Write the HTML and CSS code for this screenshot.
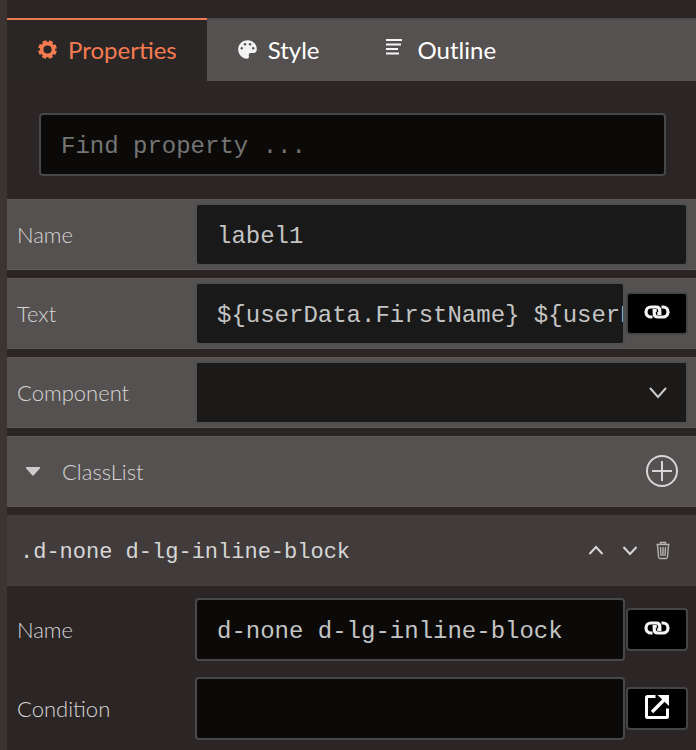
FILE: index.html
```html
<!DOCTYPE html>
<html lang="en">
<head>
<meta charset="utf-8">
<title>Properties</title>
<link rel="stylesheet" href="styles.css">
</head>
<body>
<svg class="sprite" aria-hidden="true">
  <symbol id="link" viewBox="0 0 26 14">
    <g fill="none" stroke="#f5f5f5" stroke-width="3.200">
      <path d="M8.500 12H7A5 5 0 0 1 7 2h5q3.800 0 3.800 3.800V8.500h-2.500"/>
      <path d="M17.500 2H19A5 5 0 0 1 19 12h-5q-3.800 0-3.800-3.800V5.500h2.500"/>
    </g>
  </symbol>
</svg>
<main class="panel">
  <nav class="tabs" role="tablist">
    <button class="tab tab-active" role="tab" aria-selected="true">
      <svg width="19" height="19" viewBox="0 0 19 19"><g fill="none" stroke="currentColor"><circle cx="9.500" cy="9.500" r="5.900" stroke-width="3.600"/><circle cx="9.500" cy="9.500" r="8.200" stroke-width="2.400" stroke-dasharray="4 2.440" stroke-dashoffset="-1.220"/></g></svg>
      <span>Properties</span>
    </button>
    <button class="tab" role="tab">
      <svg width="19" height="19" viewBox="0 0 19 19"><path fill="#f2f2f2" d="M9.500 .3C4.300.3.2 4.300.2 9.300c0 5.200 4 9.400 8.900 9.400 1.400 0 2-.9 1.800-2-.3-1.600-.2-3.300 1.700-3.600 2.200-.3 6.200 1 6.200-4C18.800 4.200 14.700.3 9.500.3z"/><g fill="#555150"><circle cx="3.800" cy="8.300" r="1.200"/><circle cx="7" cy="4.300" r="1.200"/><circle cx="12" cy="4.300" r="1.200"/><circle cx="15.200" cy="8.300" r="1.200"/></g></svg>
      <span>Style</span>
    </button>
    <button class="tab" role="tab">
      <svg width="26" height="24" viewBox="0 0 26 24"><path stroke="#f5f5f5" stroke-width="2" d="M5 2h16M5 6.500h15M5 11h12M5 15.500h13"/></svg>
      <span>Outline</span>
    </button>
  </nav>

  <div class="search">
    <input class="box" type="text" placeholder="Find property ..." aria-label="Find property">
  </div>

  <div class="rows">
    <div class="row row-light">
      <label for="name">Name</label>
      <input class="box" id="name" type="text" value="label1">
    </div>
    <div class="row row-light">
      <label for="text">Text</label>
      <input class="box" id="text" type="text" value="${userData.FirstName} ${userD">
      <button class="bind" aria-label="Bind text"><svg width="26" height="14"><use href="#link"/></svg></button>
    </div>
    <div class="row row-light">
      <label for="component">Component</label>
      <div class="select">
        <select class="box" id="component"><option></option></select>
        <svg class="arrow" width="20" height="14" viewBox="0 0 20 14"><path d="M2 2l8 9 8-9"/></svg>
      </div>
    </div>
    <div class="row row-light row-group">
      <button class="toggle" aria-expanded="true">
        <svg width="16" height="11" viewBox="0 0 16 11"><path fill="#ccc" d="M1.500 1h13q1 .3.500 1.300L9 9q-1 1.300-2 0L1 2.300Q.500 1.300 1.500 1z"/></svg>
        <span>ClassList</span>
      </button>
      <button class="plain" aria-label="Add class"><svg class="line" width="34" height="34" viewBox="0 0 34 34"><circle cx="17" cy="16" r="15"/><path d="M17 6v20M7 16h20"/></svg></button>
    </div>
    <div class="row row-item">
      <code>.d-none d-lg-inline-block</code>
      <div class="actions">
        <button class="plain" aria-label="Move up"><svg class="line" width="16" height="12" viewBox="0 0 16 12"><path d="M1.500 9L8 2l6.500 7"/></svg></button>
        <button class="plain" aria-label="Move down"><svg class="line" width="16" height="12" viewBox="0 0 16 12"><path d="M1.500 2L8 9l6.500-7"/></svg></button>
        <button class="plain" aria-label="Delete"><svg class="trash" width="14" height="20" viewBox="0 0 14 20"><path d="M.500 3.500h13M4.500 3V1.500h5V3M1.500 4l1 12q.200 1.500 1.500 1.500h6q1.300 0 1.500-1.500l1-12M4.500 6l.500 9M7 6v9M9.500 6L9 15"/></svg></button>
      </div>
    </div>
    <div class="row">
      <label for="class-name">Name</label>
      <input class="box" id="class-name" type="text" value="d-none d-lg-inline-block">
      <button class="bind" aria-label="Bind name"><svg width="26" height="14"><use href="#link"/></svg></button>
    </div>
    <div class="row">
      <label for="condition">Condition</label>
      <input class="box" id="condition" type="text">
      <button class="bind" aria-label="Open condition"><svg width="26" height="26" viewBox="0 0 26 26"><g fill="none" stroke="#fff"><path stroke-width="3" d="M11.500 2.500h-8q-1 0-1 1v19q0 1 1 1h19q1 0 1-1v-8"/><path stroke-width="3.400" d="M8 18L22 4"/></g><path fill="#fff" d="M13.500 1H25v11z"/></svg></button>
    </div>
  </div>
</main>
</body>
</html>
```
FILE: styles.css
```css
* {
  box-sizing: border-box;
}

body {
  margin: 0;
  min-height: 100vh;
  background: #2b2525;
  color: #d6d6d6;
  font-family: Lato, sans-serif;
  font-size: 22px;
}

button {
  margin: 0;
  padding: 0;
  border: 0;
  background: none;
  color: inherit;
  font: inherit;
}

svg {
  display: block;
  flex: none;
}

.sprite {
  position: absolute;
  width: 0;
  height: 0;
}

.panel {
  min-height: 100vh;
  padding-top: 18px;
  border-left: 7px solid #3b3532;
}

.tabs {
  display: flex;
  background: #555150;
  box-shadow: inset 0 2px #4a4b4b;
}

.tab {
  display: flex;
  align-items: center;
  gap: 11px;
  height: 63px;
  padding: 0 30px 2px 31px;
  border-top: 2px solid #4a4b4b;
  color: #fff;
  font-size: 24px;
}

.tab-active {
  border-color: #ee7850;
  background: #2b2626;
  color: #f57c51;
}

.search {
  padding: 32px 30px 23px 32px;
}

.box {
  display: block;
  flex: 1;
  width: 100%;
  min-width: 0;
  height: 63px;
  padding: 3px 0 0 20px;
  border: 2px solid #47484a;
  border-radius: 4px;
  outline: 0;
  background: #0b0a08;
  color: #c4c4c4;
  font-family: "Liberation Mono", monospace;
  font-size: 24px;
}

.box::placeholder {
  color: #757575;
  opacity: 1;
}

.rows {
  display: flex;
  flex-direction: column;
  gap: 8px;
}

.row {
  display: flex;
  align-items: center;
  height: 71px;
  padding: 0 8px 0 10px;
}

.row label {
  flex: none;
  width: 178px;
  font-weight: 300;
}

.row-light {
  border-top: 1px solid #5d5958;
  border-bottom: 1px solid #5d5958;
  background: #555150;
}

.row-light .box {
  border-color: #4d4f50;
  background: #191919;
}

.row-group {
  padding-right: 17px;
}

.row-item {
  background: #413c3b;
  padding: 0 26px 0 13px;
}

.row-item code {
  flex: 1;
  padding-top: 3px;
  font-family: "Liberation Mono", monospace;
  font-size: 22px;
}

.bind {
  display: flex;
  flex: none;
  align-items: center;
  justify-content: center;
  width: 62px;
  height: 43px;
  margin-left: 1px;
  padding-bottom: 3px;
  border: 2px solid #444546;
  border-radius: 4px;
  background: #000;
}

.select {
  position: relative;
  flex: 1;
}

.select .box {
  border-radius: 0;
  background: #1b1a18;
  appearance: none;
}

.arrow {
  position: absolute;
  top: 25px;
  right: 20px;
  fill: none;
  stroke: #ccc;
  stroke-width: 2;
  pointer-events: none;
}

.toggle {
  display: flex;
  flex: 1;
  align-items: center;
  gap: 21px;
  padding-left: 8px;
  font-weight: 300;
}

.line {
  fill: none;
  stroke: #d6d6d6;
  stroke-width: 2;
}

.actions {
  display: flex;
  align-items: center;
  gap: 18px;
}

.trash {
  fill: none;
  stroke: #b5b3b2;
  stroke-width: 1.400;
}
```
